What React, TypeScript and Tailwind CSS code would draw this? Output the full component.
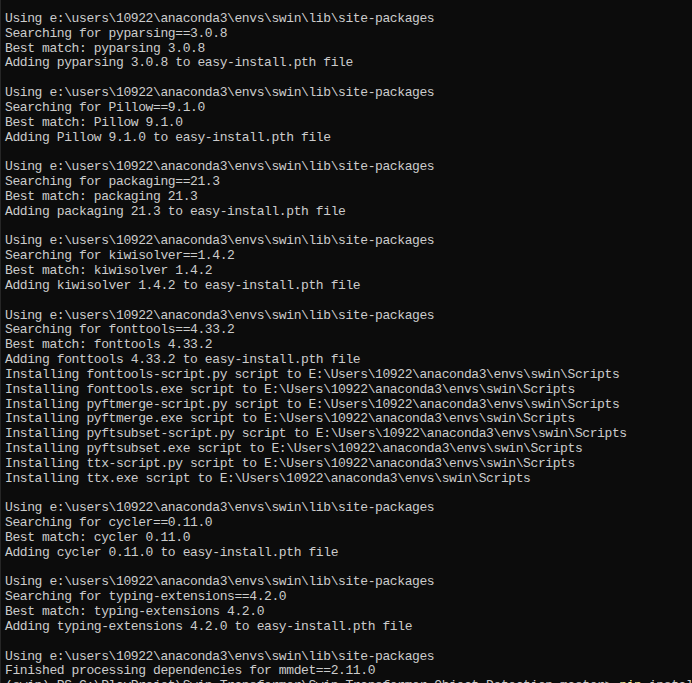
const ENV = 'e:\\users\\10922\\anaconda3\\envs\\swin\\lib\\site-packages'
const SCRIPTS = 'E:\\Users\\10922\\anaconda3\\envs\\swin\\Scripts'

const PACKAGES: { name: string; version: string; extra?: string[] }[] = [
  { name: 'pyparsing', version: '3.0.8' },
  { name: 'Pillow', version: '9.1.0' },
  { name: 'packaging', version: '21.3' },
  { name: 'kiwisolver', version: '1.4.2' },
  {
    name: 'fonttools',
    version: '4.33.2',
    extra: [
      'fonttools-script.py',
      'fonttools.exe',
      'pyftmerge-script.py',
      'pyftmerge.exe',
      'pyftsubset-script.py',
      'pyftsubset.exe',
      'ttx-script.py',
      'ttx.exe',
    ],
  },
  { name: 'cycler', version: '0.11.0' },
  { name: 'typing-extensions', version: '4.2.0' },
]

function buildLines(): string[] {
  const lines: string[] = []
  PACKAGES.forEach((pkg, i) => {
    if (i > 0) lines.push('')
    lines.push(`Using ${ENV}`)
    lines.push(`Searching for ${pkg.name}==${pkg.version}`)
    lines.push(`Best match: ${pkg.name} ${pkg.version}`)
    lines.push(`Adding ${pkg.name} ${pkg.version} to easy-install.pth file`)
    pkg.extra?.forEach((s) => lines.push(`Installing ${s} script to ${SCRIPTS}`))
  })
  lines.push('')
  lines.push(`Using ${ENV}`)
  lines.push('Finished processing dependencies for mmdet==2.11.0')
  return lines
}

export default function App() {
  const lines = buildLines()

  return (
    <div className="w-[692px] h-[683px] overflow-hidden bg-[#0c0c0c] border-l border-[#262626]">
      <div
        className="pt-[12px] pl-[4px] text-[13px] leading-[14.84px] tracking-[-0.4px] text-[#cccccc] whitespace-pre"
        style={{ fontFamily: '"Liberation Mono", "DejaVu Sans Mono", monospace' }}
      >
        {lines.map((line, i) => (
          <div key={i} className="h-[14.84px]">
            {line}
          </div>
        ))}
        {/* prompt line, cut by the window edge as in the capture */}
        <div className="h-[14.84px]">
          (swin) PS C:\PlayProjet\Swin-Transformer\Swin-Transformer-Object-Detection-master&gt;{' '}
          <span className="text-[#f9f1a5]">pip</span> install -v -e .
        </div>
      </div>
    </div>
  )
}
